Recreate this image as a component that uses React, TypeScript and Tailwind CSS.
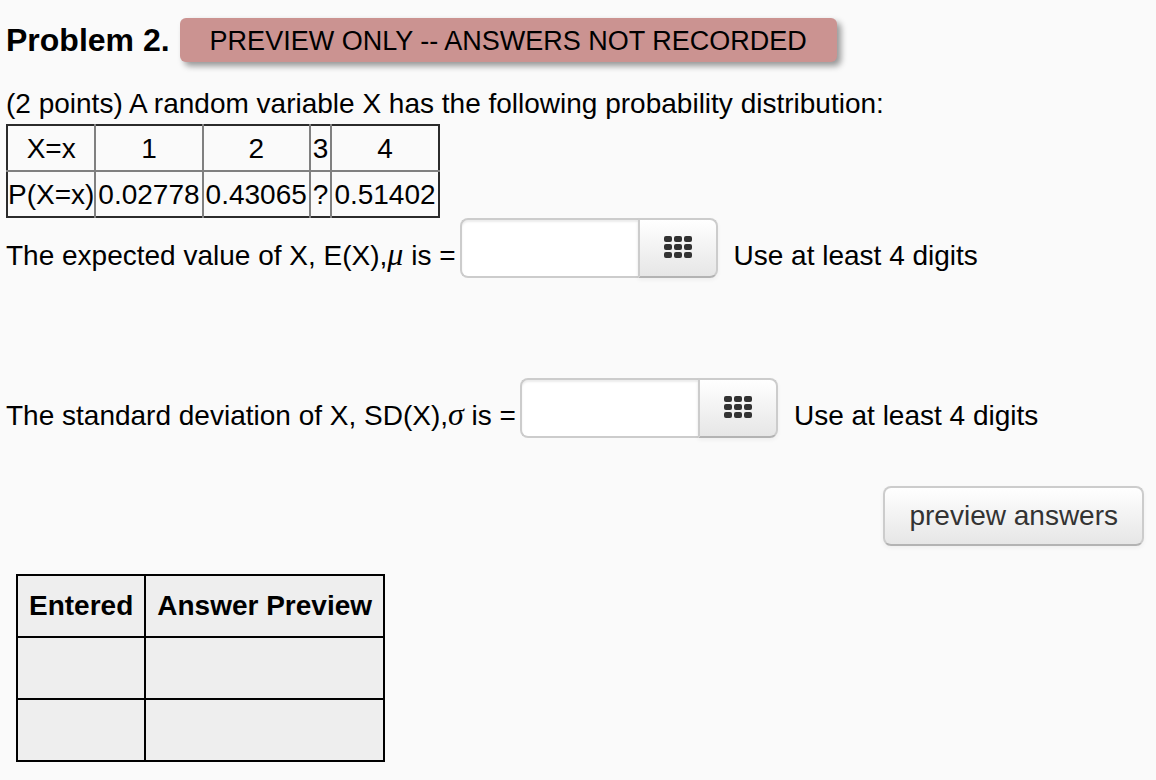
const distribution = [
  { x: '1', p: '0.02778' },
  { x: '2', p: '0.43065' },
  { x: '3', p: '?' },
  { x: '4', p: '0.51402' },
];

const questions = [
  { id: 'mean', label: 'The expected value of X, E(X),', symbol: 'μ' },
  { id: 'sd', label: 'The standard deviation of X, SD(X),', symbol: 'σ' },
];

const buttonStyle =
  'border-2 border-[#ccc] border-b-[#b3b3b3] bg-linear-to-b from-white to-[#e6e6e6] shadow-[0_2px_4px_rgba(0,0,0,0.05)]';

function KeypadIcon() {
  return (
    <svg width="28" height="22" viewBox="0 0 28 22" fill="#333" aria-hidden="true">
      {[0, 8, 16].map((y) =>
        [0, 10, 20].map((x) => <rect key={`${x}-${y}`} x={x} y={y} width="8" height="6" rx="2" />)
      )}
    </svg>
  );
}

function AnswerRow({ id, label, symbol }: { id: string; label: string; symbol: string }) {
  return (
    <div className="flex items-end">
      <label htmlFor={id} className="mr-1 pb-0.5 whitespace-nowrap">
        {label}
        <i className="font-['Liberation_Serif',serif] text-[32px] leading-none">{symbol}</i> is =
      </label>
      <div className="flex">
        <input
          id={id}
          type="text"
          className="h-[60px] w-[178px] rounded-l-lg border-2 border-r-0 border-[#ccc] bg-white px-3 shadow-[inset_0_2px_2px_rgba(0,0,0,0.075)] outline-none"
        />
        <button
          type="button"
          aria-label="Open equation editor"
          className={`flex h-[60px] w-20 items-center justify-center rounded-r-lg pb-0.5 ${buttonStyle}`}
        >
          <KeypadIcon />
        </button>
      </div>
      <span className="ml-4 pb-0.5">Use at least 4 digits</span>
    </div>
  );
}

export default function App() {
  return (
    <main className="min-h-screen bg-[#fafafa] pt-[18px] pr-3 pb-[18px] pl-1.5 font-['Liberation_Sans',Arial,sans-serif] text-[28px] leading-10 text-black">
      <header className="flex items-center gap-2.5">
        <h1 className="text-[32px] font-bold">Problem 2.</h1>
        <div className="rounded-md bg-[#cb9391] px-[30px] pt-[3px] pb-px text-[27px] shadow-[4px_4px_6px_rgba(0,0,0,0.4)]">
          PREVIEW ONLY -- ANSWERS NOT RECORDED
        </div>
      </header>

      <p className="mt-[22px]">(2 points) A random variable X has the following probability distribution:</p>

      {/* Outer frame is darker than the rules between the cells */}
      <table className="border-collapse border-2 border-[#2b2b2b] text-center">
        <tbody className="divide-y-2 divide-[#808080]">
          <tr className="divide-x-2 divide-[#808080]">
            <th scope="row" className="pt-[3px] pb-px font-normal">X=x</th>
            {distribution.map((col) => (
              <td key={col.x} className="px-0.5 pt-[3px] pb-px">{col.x}</td>
            ))}
          </tr>
          <tr className="divide-x-2 divide-[#808080]">
            <th scope="row" className="pt-[3px] pb-px font-normal">P(X=x)</th>
            {distribution.map((col) => (
              <td key={col.x} className="px-0.5 pt-[3px] pb-px">{col.p}</td>
            ))}
          </tr>
        </tbody>
      </table>

      <form>
        <div className="flex flex-col gap-[100px]">
          {questions.map((q) => (
            <AnswerRow key={q.id} {...q} />
          ))}
        </div>

        <div className="mt-12 flex justify-end">
          <button type="button" className={`h-[60px] rounded-lg px-6 text-[#333] ${buttonStyle}`}>
            preview answers
          </button>
        </div>
      </form>

      <table className="mt-7 ml-2.5 border-collapse bg-[#eee]">
        <thead>
          <tr>
            <th className="border-2 border-black px-[11px] py-2.5">Entered</th>
            <th className="border-2 border-black px-[11px] py-2.5">Answer Preview</th>
          </tr>
        </thead>
        <tbody>
          {questions.map((q) => (
            <tr key={q.id} className="h-[62px]">
              <td className="border-2 border-black p-2.5"></td>
              <td className="border-2 border-black p-2.5"></td>
            </tr>
          ))}
        </tbody>
      </table>
    </main>
  );
}
